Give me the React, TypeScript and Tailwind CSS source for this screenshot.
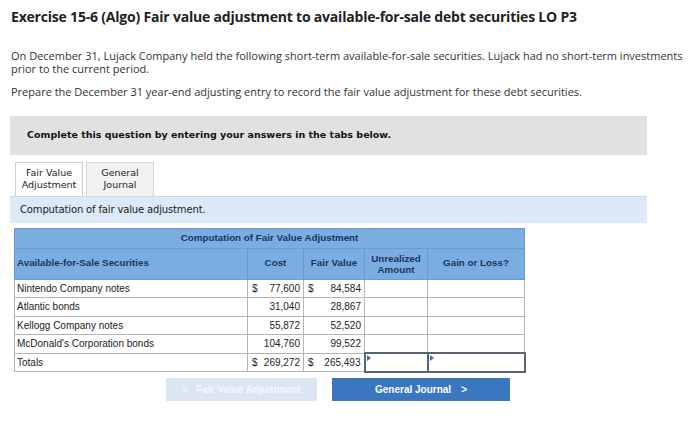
import React from "react";

const rows = [
  { name: "Nintendo Company notes", cost: "77,600", fv: "84,584", dollar: true },
  { name: "Atlantic bonds", cost: "31,040", fv: "28,867", dollar: false },
  { name: "Kellogg Company notes", cost: "55,872", fv: "52,520", dollar: false },
  { name: "McDonald's Corporation bonds", cost: "104,760", fv: "99,522", dollar: false },
];

function Tri() {
  return (
    <span className="absolute left-[1px] top-[1px] w-0 h-0 border-t-[3px] border-b-[3px] border-l-[4px] border-t-transparent border-b-transparent border-l-[#3a6fb5]" />
  );
}

export default function App() {
  return (
    <div className="w-[700px] h-[444px] bg-white relative overflow-hidden" style={{ fontFamily: '"Open Sans", sans-serif' }}>
      <div className="pl-[11px] pt-[7px]">
        <h1 className="text-[14px] font-bold text-[#222] leading-[20px] tracking-[-0.2px]">
          Exercise 15-6 (Algo) Fair value adjustment to available-for-sale debt securities LO P3
        </h1>
        <p className="mt-[23px] text-[11px] leading-[12.5px] text-[#333] tracking-[0px] pr-[8px]">
          On December 31, Lujack Company held the following short-term available-for-sale securities. Lujack had no short-term investments prior to the current period.
        </p>
        <p className="mt-[11px] text-[11px] leading-[12.5px] text-[#333] tracking-[0px]">
          Prepare the December 31 year-end adjusting entry to record the fair value adjustment for these debt securities.
        </p>
      </div>

      <div className="ml-[10px] mt-[17px] w-[637px] h-[39px] bg-[#e1e1e1] flex items-center pl-[17px]" style={{ fontFamily: '"DejaVu Sans", sans-serif' }}>
        <span className="text-[9.5px] font-bold text-[#111]">Complete this question by entering your answers in the tabs below.</span>
      </div>

      <div className="ml-[10px] mt-[7px] w-[637px]" style={{ fontFamily: '"DejaVu Sans", sans-serif' }}>
        <div className="flex items-end pl-[5px] gap-[3px] h-[34px]">
          <div className="w-[68px] h-[34px] bg-white border border-[#cfcfcf] border-b-0 flex items-center justify-center text-center text-[9.5px] leading-[12px] text-[#222]">
            Fair Value<br />Adjustment
          </div>
          <div className="w-[68px] h-[34px] bg-[#f2f2f2] border border-[#d6d6d6] border-b-0 flex items-center justify-center text-center text-[9.5px] leading-[12px] text-[#222]">
            General<br />Journal
          </div>
        </div>
        <div className="h-[27px] bg-[#dbe9f8] border-t border-[#c8d6e6] flex items-center pl-[10px] text-[10px] text-[#222] tracking-[-0.15px]">
          Computation of fair value adjustment.
        </div>
      </div>

      <div className="ml-[14px] mt-[5px]" style={{ fontFamily: '"Liberation Sans", Arial, sans-serif' }}>
        <table className="border-collapse table-fixed w-[510px] text-[10px] text-[#222]">
          <colgroup>
            <col className="w-[233px]" />
            <col className="w-[56px]" />
            <col className="w-[61px]" />
            <col className="w-[63px]" />
            <col className="w-[97px]" />
          </colgroup>
          <thead>
            <tr className="h-[20px] bg-[#7aade2]">
              <th colSpan={5} className="border border-[#6b9cd0] text-center font-bold text-[#1c355c] text-[9.8px]">
                Computation of Fair Value Adjustment
              </th>
            </tr>
            <tr className="h-[31px] bg-[#7aade2] text-[#1c355c] text-[9.8px]">
              <th className="border border-[#6b9cd0] text-left pl-[2px] font-bold">Available-for-Sale Securities</th>
              <th className="border border-[#6b9cd0] font-bold">Cost</th>
              <th className="border border-[#6b9cd0] font-bold">Fair Value</th>
              <th className="border border-[#6b9cd0] font-bold leading-[11px]">Unrealized<br />Amount</th>
              <th className="border border-[#6b9cd0] font-bold">Gain or Loss?</th>
            </tr>
          </thead>
          <tbody>
            {rows.map((r) => (
              <tr key={r.name} className="h-[18.5px]">
                <td className="border border-[#b5b5b5] pl-[2px]">{r.name}</td>
                <td className="border border-[#b5b5b5] pr-[3px]">
                  <div className="flex justify-between pl-[4px]"><span>{r.dollar ? "$" : ""}</span><span>{r.cost}</span></div>
                </td>
                <td className="border border-[#b5b5b5] pr-[3px]">
                  <div className="flex justify-between pl-[4px]"><span>{r.dollar ? "$" : ""}</span><span>{r.fv}</span></div>
                </td>
                <td className="border border-[#b5b5b5]"></td>
                <td className="border border-[#b5b5b5]"></td>
              </tr>
            ))}
            <tr className="h-[18.5px]">
              <td className="border border-[#b5b5b5] pl-[2px]">Totals</td>
              <td className="border border-[#b5b5b5] border-t-[#777] pr-[3px]">
                <div className="flex justify-between pl-[4px]"><span>$</span><span>269,272</span></div>
              </td>
              <td className="border border-[#b5b5b5] border-t-[#777] pr-[3px]">
                <div className="flex justify-between pl-[4px]"><span>$</span><span>265,493</span></div>
              </td>
              <td className="border-2 border-[#5a6270] relative p-0"><Tri /></td>
              <td className="border-2 border-[#5a6270] relative p-0"><Tri /></td>
            </tr>
          </tbody>
        </table>
      </div>

      <div className="ml-[166px] mt-[5px] flex gap-[15px]" style={{ fontFamily: '"Liberation Sans", Arial, sans-serif' }}>
        <div className="w-[151px] h-[23px] bg-[#dce6f3] flex items-center justify-center text-[10px] font-bold text-[#f4f7fb] gap-[8px]">
          <span>&lt;</span><span>Fair Value Adjustment</span>
        </div>
        <div className="w-[178px] h-[23px] bg-[#3b77c0] flex items-center justify-center text-[10px] font-bold text-white gap-[10px]">
          <span>General Journal</span><span>&gt;</span>
        </div>
      </div>
    </div>
  );
}
